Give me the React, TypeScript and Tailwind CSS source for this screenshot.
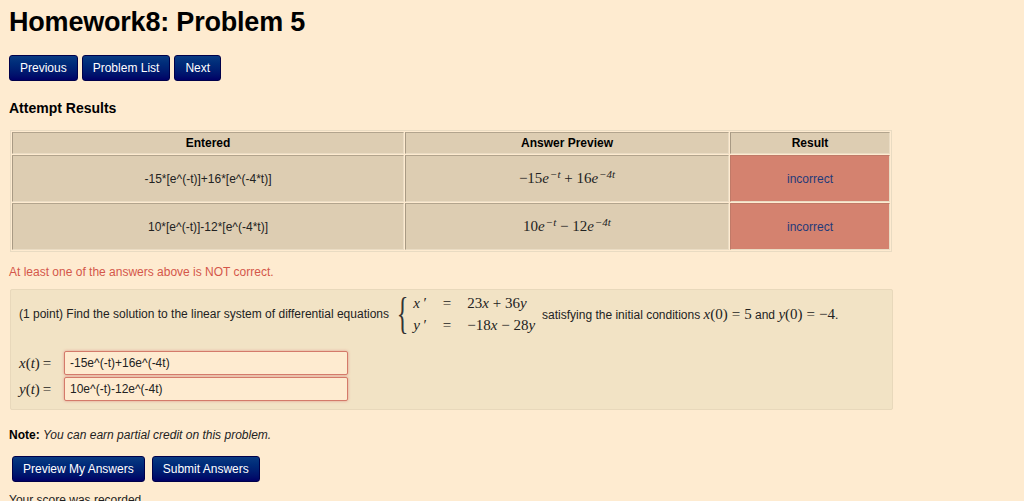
import React from "react";

const serif = { fontFamily: '"Liberation Serif", "DejaVu Serif", serif' } as const;

function V({ children }: { children: React.ReactNode }) {
  return <span className="italic">{children}</span>;
}

function Eq() {
  return <span className="mx-[4px]">=</span>;
}

function Btn({ children, className = "" }: { children: React.ReactNode; className?: string }) {
  return (
    <button
      className={
        "h-[26px] rounded-[3px] border border-[#00004a] bg-gradient-to-b from-[#0a3a82] to-[#000066] px-[10px] text-[12px] text-white " +
        className
      }
    >
      {children}
    </button>
  );
}

function Sup({ children }: { children: React.ReactNode }) {
  return <sup className="relative top-[-5px] ml-[1px] text-[11px] italic">{children}</sup>;
}

export default function App() {
  const cellB =
    "border border-t-[#b2a48d] border-l-[#a89a84] border-b-[#eadcc4] border-r-[#eadcc4] bg-[#ddcdb2]";
  const th = "h-[22px] text-[12px] font-bold text-black " + cellB;
  const td = "h-[47px] text-[12px] text-[#222] " + cellB;
  const tdr =
    "h-[47px] border border-t-[#c07a68] border-l-[#c07a68] border-b-[#eadcc4] border-r-[#eadcc4] bg-[#d4826f] text-[12px] text-[#1f3a7a]";
  return (
    <div
      className="min-h-[501px] w-[1024px] overflow-hidden bg-[#feebd0] text-black"
      style={{ fontFamily: '"Liberation Sans", Arial, sans-serif' }}
    >
      <div className="pl-[9px] pt-[6px]">
        <h1 className="text-[27px] font-bold leading-[32px] tracking-[-0.2px]">Homework8: Problem 5</h1>
        <div className="mt-[17px] flex gap-[4px]">
          <Btn>Previous</Btn>
          <Btn>Problem List</Btn>
          <Btn>Next</Btn>
        </div>
        <h2 className="mt-[19px] text-[14px] font-bold leading-[16px]">Attempt Results</h2>

        <table className="mt-[14px] ml-[1px] w-[882px] border border-[#e9dbc2] [border-spacing:1px] [border-collapse:separate]">
          <thead>
            <tr>
              <th className={th + " w-[392px]"}>Entered</th>
              <th className={th + " w-[324px]"}>Answer Preview</th>
              <th className={th}>Result</th>
            </tr>
          </thead>
          <tbody>
            <tr>
              <td className={td + " text-center"}>-15*[e^(-t)]+16*[e^(-4*t)]</td>
              <td className={td + " text-center text-[15px] text-[#222]"} style={serif}>
                −15<V>e</V>
                <Sup>−t</Sup> + 16<V>e</V>
                <Sup>−4t</Sup>
              </td>
              <td className={tdr + " text-center"}>incorrect</td>
            </tr>
            <tr>
              <td className={td + " text-center"}>10*[e^(-t)]-12*[e^(-4*t)]</td>
              <td className={td + " text-center text-[15px] text-[#222]"} style={serif}>
                10<V>e</V>
                <Sup>−t</Sup> − 12<V>e</V>
                <Sup>−4t</Sup>
              </td>
              <td className={tdr + " text-center"}>incorrect</td>
            </tr>
          </tbody>
        </table>

        <p className="mt-[13px] text-[12px] leading-[14px] text-[#d4574a]">
          At least one of the answers above is NOT correct.
        </p>

        <div className="mt-[10px] ml-[1px] w-[883px] rounded-[2px] border border-[#e8d8bb] bg-[#f2e3c5] px-[8px] pt-[2px] pb-[8px]">
          <div className="flex items-center text-[12px] text-[#222]">
            <span>(1 point) Find the solution to the linear system of differential equations</span>
            <span className="ml-[3px] flex items-center text-[15px]" style={serif}>
              <span className="inline-block text-[44px] font-light leading-[40px] text-[#333] [transform:scaleX(0.55)]">{"{"}</span>
              <span className="ml-[0px] grid grid-cols-[auto_auto_auto] gap-x-[16px] leading-[22px]">
                <span>
                  <V>x</V> ′
                </span>
                <span>=</span>
                <span>
                  23<V>x</V> + 36<V>y</V>
                </span>
                <span>
                  <V>y</V> ′
                </span>
                <span>=</span>
                <span>
                  −18<V>x</V> − 28<V>y</V>
                </span>
              </span>
            </span>
            <span className="ml-[7px]">
              satisfying the initial conditions{" "}
              <span className="text-[15px]" style={serif}>
                <V>x</V>(0)
                <Eq />5
              </span>{" "}
              and{" "}
              <span className="text-[15px]" style={serif}>
                <V>y</V>(0)
                <Eq />
                −4
              </span>
              .
            </span>
          </div>

          <div className="mt-[15px] flex flex-col gap-[2px]">
            <div className="flex items-center">
              <span className="w-[45px] text-[15px] text-[#222]" style={serif}>
                <V>x</V>(<V>t</V>)<span className="ml-[3px]">=</span>
              </span>
              <div className="flex h-[24px] w-[284px] items-center rounded-[2px] border border-[#d47a6a] bg-[#feebd0] px-[5px] text-[12px] text-[#222] shadow-[0_0_3px_#e0978a]">
                -15e^(-t)+16e^(-4t)
              </div>
            </div>
            <div className="flex items-center">
              <span className="w-[45px] text-[15px] text-[#222]" style={serif}>
                <V>y</V>(<V>t</V>)<span className="ml-[3px]">=</span>
              </span>
              <div className="flex h-[24px] w-[284px] items-center rounded-[2px] border border-[#d47a6a] bg-[#feebd0] px-[5px] text-[12px] text-[#222] shadow-[0_0_3px_#e0978a]">
                10e^(-t)-12e^(-4t)
              </div>
            </div>
          </div>
        </div>

        <p className="mt-[18px] text-[12px] leading-[14px] text-[#222]">
          <b className="text-black">Note:</b> <i>You can earn partial credit on this problem.</i>
        </p>

        <div className="mt-[14px] ml-[3px] flex gap-[7px]">
          <Btn className="h-[25px]">Preview My Answers</Btn>
          <Btn className="h-[25px]">Submit Answers</Btn>
        </div>

        <p className="mt-[11px] text-[12px] leading-[14px] text-[#222]">Your score was recorded.</p>
      </div>
    </div>
  );
}
